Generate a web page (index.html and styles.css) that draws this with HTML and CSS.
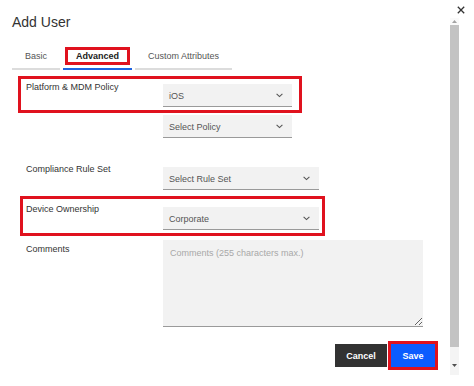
FILE: index.html
```html
<!DOCTYPE html>
<html lang="en">
<head>
<meta charset="utf-8">
<title>Add User</title>
<link rel="stylesheet" href="styles.css">
</head>
<body>
<div class="dialog">
  <div class="main">
    <h1 class="title">Add User</h1>
    <div class="tabs">
      <div class="tab">Basic</div>
      <div class="tab active"><span class="mark">Advanced</span></div>
      <div class="tab">Custom Attributes</div>
    </div>

    <div class="row boxed box1">
      <div class="label">Platform &amp; MDM Policy</div>
      <div class="select sel-sm"><span>iOS</span><svg width="7" height="5" viewBox="0 0 7 5"><path d="M0.6 0.8 L3.5 3.6 L6.4 0.8" fill="none" stroke="#555" stroke-width="1.1"/></svg></div>
    </div>

    <div class="row plain policy">
      <div class="label"></div>
      <div class="select sel-sm"><span>Select Policy</span><svg width="7" height="5" viewBox="0 0 7 5"><path d="M0.6 0.8 L3.5 3.6 L6.4 0.8" fill="none" stroke="#555" stroke-width="1.1"/></svg></div>
    </div>

    <div class="row plain compliance">
      <div class="label">Compliance Rule Set</div>
      <div class="select sel-lg"><span>Select Rule Set</span><svg width="7" height="5" viewBox="0 0 7 5"><path d="M0.6 0.8 L3.5 3.6 L6.4 0.8" fill="none" stroke="#555" stroke-width="1.1"/></svg></div>
    </div>

    <div class="row boxed box2">
      <div class="label">Device Ownership</div>
      <div class="select sel-lg"><span>Corporate</span><svg width="7" height="5" viewBox="0 0 7 5"><path d="M0.6 0.8 L3.5 3.6 L6.4 0.8" fill="none" stroke="#555" stroke-width="1.1"/></svg></div>
    </div>

    <div class="row plain comments">
      <div class="label">Comments</div>
      <textarea class="textarea" placeholder="Comments (255 characters max.)"></textarea>
    </div>

    <div class="actions">
      <button class="btn cancel">Cancel</button>
      <button class="btn save">Save</button>
    </div>
  </div>
  <div class="side">
    <div class="close">
      <svg width="8" height="8" viewBox="0 0 8 8"><path d="M0.8 0.8 L7.2 7.2 M7.2 0.8 L0.8 7.2" stroke="#333" stroke-width="1.3"/></svg>
    </div>
    <div class="scrollbar">
      <div class="arrow up"><svg width="5" height="3" viewBox="0 0 5 3"><path d="M0 3 L2.5 0 L5 3 Z" fill="#a3a3a3"/></svg></div>
      <div class="thumb"></div>
      <div class="track"></div>
      <div class="arrow down"><svg width="5" height="3" viewBox="0 0 5 3"><path d="M0 0 L2.5 3 L5 0 Z" fill="#505050"/></svg></div>
    </div>
  </div>
</div>
</body>
</html>
```

FILE: styles.css
```css
* { box-sizing: border-box; }

html, body {
  margin: 0;
  padding: 0;
  background: #fff;
}

body {
  font-family: "Liberation Sans", Arial, sans-serif;
  color: #333;
}

.dialog {
  width: 474px;
  height: 386px;
  display: flex;
  background: #fff;
}

.main {
  width: 446px;
  padding: 14px 0 0 12px;
  display: flex;
  flex-direction: column;
  align-items: flex-start;
}

.title {
  margin: 0;
  font-size: 14px;
  line-height: 16px;
  font-weight: normal;
  color: #333;
}

.tabs {
  display: flex;
  gap: 3px;
  margin-top: 15px;
}

.tab {
  padding: 5px 13px 6px;
  font-size: 9px;
  line-height: 12px;
  color: #555;
  border-bottom: 2px solid #dcdcdc;
}

.tab.active {
  color: #222;
  font-weight: bold;
  border-bottom-color: #1f63e0;
}

.mark {
  display: inline-block;
  padding: 0 8px;
  margin: 0 -8px;
  outline: 3px solid #e0121e;
}

.row {
  display: flex;
  align-items: flex-start;
}

.label {
  width: 137px;
  flex: none;
  font-size: 9px;
  line-height: 12px;
  color: #333;
}

.boxed {
  border: 3px solid #e0121e;
}

.plain {
  padding-left: 14px;
}

.box1 {
  margin: 6px 0 0 6px;
  padding: 0 7px 3px 5px;
}
.box1 .label { margin-top: 2px; }
.box1 .select { margin-top: 5px; }

.policy { margin-top: 2px; }

.compliance { margin-top: 25px; }
.compliance .select { margin-top: 4px; }

.box2 {
  margin: 6px 0 0 8px;
  padding: 0 3px 3px 3px;
}
.box2 .label { margin-top: 4px; }
.box2 .select { margin-top: 8px; }

.comments { margin-top: 4px; }
.comments .label { margin-top: 3px; }

.select {
  height: 23px;
  background: #f2f2f2;
  border-bottom: 1px solid #9a9a9a;
  display: flex;
  align-items: center;
  justify-content: space-between;
  padding: 1px 9px 0 6px;
  font-size: 9px;
  color: #555;
}

.sel-sm { width: 129px; }
.sel-lg { width: 156px; }

.textarea {
  width: 260px;
  height: 87px;
  background: #f2f2f2;
  border: none;
  border-bottom: 1px solid #9a9a9a;
  padding: 8px 7px;
  margin: 0;
  font-family: "Liberation Sans", Arial, sans-serif;
  font-size: 9px;
  line-height: 11px;
  color: #555;
  resize: both;
  outline: none;
}

.textarea::placeholder {
  color: #a8a8a8;
}

.actions {
  align-self: stretch;
  display: flex;
  justify-content: flex-end;
  gap: 4px;
  margin-top: 17px;
  padding-right: 11px;
}

.btn {
  height: 23px;
  border: none;
  margin: 0;
  font-family: "Liberation Sans", Arial, sans-serif;
  font-size: 9px;
  font-weight: bold;
  color: #fff;
  border-radius: 0;
}

.cancel {
  width: 52px;
  background: #323232;
}

.save {
  width: 44px;
  background: #0b5cff;
  outline: 3px solid #e0121e;
  outline-offset: 0;
}

.side {
  width: 28px;
  display: flex;
  flex-direction: column;
}

.close {
  height: 18px;
  display: flex;
  align-items: center;
  justify-content: center;
  padding: 2px 0 0 2px;
}

.scrollbar {
  margin-left: 4px;
  width: 9px;
  height: 357px;
  display: flex;
  flex-direction: column;
  background: #f4f4f4;
}

.arrow {
  height: 7px;
  display: flex;
  align-items: center;
  justify-content: center;
  flex: none;
}

.arrow.up { background: #fafafa; }

.thumb {
  height: 322px;
  background: #c3c3c3;
  flex: none;
}

.track {
  flex: 1;
}

.arrow.down {
  height: 14px;
  align-items: flex-start;
  padding-top: 3px;
}
```
